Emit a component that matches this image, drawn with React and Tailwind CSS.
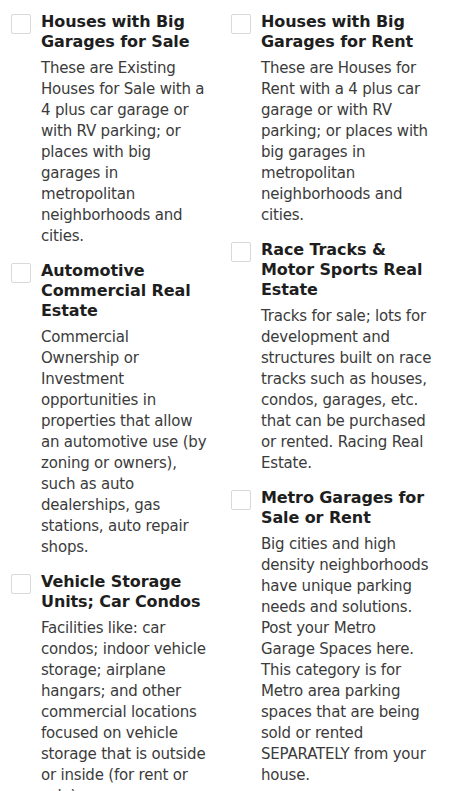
import React from "react";

const left = [
  {
    title: ["Houses with Big", "Garages for Sale"],
    body: [
      "These are Existing",
      "Houses for Sale with a",
      "4 plus car garage or",
      "with RV parking; or",
      "places with big",
      "garages in",
      "metropolitan",
      "neighborhoods and",
      "cities.",
    ],
  },
  {
    title: ["Automotive", "Commercial Real", "Estate"],
    body: [
      "Commercial",
      "Ownership or",
      "Investment",
      "opportunities in",
      "properties that allow",
      "an automotive use (by",
      "zoning or owners),",
      "such as auto",
      "dealerships, gas",
      "stations, auto repair",
      "shops.",
    ],
  },
  {
    title: ["Vehicle Storage", "Units; Car Condos"],
    body: [
      "Facilities like: car",
      "condos; indoor vehicle",
      "storage; airplane",
      "hangars; and other",
      "commercial locations",
      "focused on vehicle",
      "storage that is outside",
      "or inside (for rent or",
      "sale).",
    ],
  },
];

const right = [
  {
    title: ["Houses with Big", "Garages for Rent"],
    body: [
      "These are Houses for",
      "Rent with a 4 plus car",
      "garage or with RV",
      "parking; or places with",
      "big garages in",
      "metropolitan",
      "neighborhoods and",
      "cities.",
    ],
  },
  {
    title: ["Race Tracks &", "Motor Sports Real", "Estate"],
    body: [
      "Tracks for sale; lots for",
      "development and",
      "structures built on race",
      "tracks such as houses,",
      "condos, garages, etc.",
      "that can be purchased",
      "or rented. Racing Real",
      "Estate.",
    ],
  },
  {
    title: ["Metro Garages for", "Sale or Rent"],
    body: [
      "Big cities and high",
      "density neighborhoods",
      "have unique parking",
      "needs and solutions.",
      "Post your Metro",
      "Garage Spaces here.",
      "This category is for",
      "Metro area parking",
      "spaces that are being",
      "sold or rented",
      "SEPARATELY from your",
      "house.",
    ],
  },
];

function Lines({ lines }) {
  return lines.map((l, i) => (
    <React.Fragment key={i}>
      {l}
      {i < lines.length - 1 && <br />}
    </React.Fragment>
  ));
}

function Item({ item }) {
  return (
    <label className="flex gap-[10px] mb-[14px] cursor-pointer">
      <span className="mt-[2px] w-[20px] h-[20px] shrink-0 border border-[#d9d9d9] rounded-[2px] bg-white" />
      <span className="flex flex-col">
        <span className="text-[16px] leading-[20px] font-bold text-[#1e1e1e] whitespace-nowrap mb-[6px] tracking-[-0.1px]">
          <Lines lines={item.title} />
        </span>
        <span className="text-[15px] leading-[21px] text-[#3b3b3b] whitespace-nowrap tracking-[-0.2px]">
          <Lines lines={item.body} />
        </span>
      </span>
    </label>
  );
}

export default function App() {
  return (
    <div
      className="w-[456px] h-[791px] overflow-hidden bg-white pt-[12px] pl-[11px] pr-[5px] grid grid-cols-2 items-start"
      style={{ fontFamily: '"DejaVu Sans", sans-serif' }}
    >
      <div className="flex flex-col">
        {left.map((it, i) => (
          <Item key={i} item={it} />
        ))}
      </div>
      <div className="flex flex-col">
        {right.map((it, i) => (
          <Item key={i} item={it} />
        ))}
      </div>
    </div>
  );
}
